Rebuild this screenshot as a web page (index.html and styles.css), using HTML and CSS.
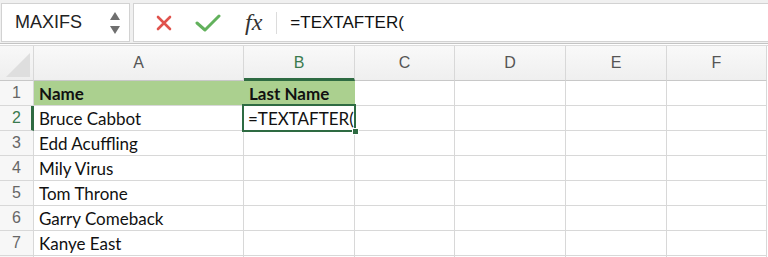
FILE: index.html
```html
<!DOCTYPE html>
<html lang="en">
<head>
    <meta charset="UTF-8">
    <title>TEXTAFTER</title>
    <link rel="stylesheet" href="styles.css">
</head>
<body>
    <div class="toolbar">
        <div class="name-box">
            <span class="name">MAXIFS</span>
            <svg class="spin" width="12" height="26" viewBox="0 0 12 26">
                <path d="M6 2 L11 10 L1 10 Z" fill="#6f6f6f"/>
                <path d="M1 16 L11 16 L6 24 Z" fill="#6f6f6f"/>
            </svg>
        </div>
        <div class="formula-box">
            <svg class="icon" width="18" height="18" viewBox="0 0 18 18">
                <path d="M3 3 L15 15 M15 3 L3 15" stroke="#e0534d" stroke-width="2.6" stroke-linecap="round"/>
            </svg>
            <svg class="icon" width="26" height="20" viewBox="0 0 26 20">
                <path d="M2 10 L10 17 L24 3" fill="none" stroke="#62b15c" stroke-width="3" stroke-linecap="round" stroke-linejoin="round"/>
            </svg>
            <span class="fx">fx</span>
            <span class="sep"></span>
            <span class="formula">=TEXTAFTER(</span>
        </div>
    </div>

    <div class="sheet">
        <div class="corner"><span class="tri"></span></div>
        <div class="col-head">A</div>
        <div class="col-head active">B</div>
        <div class="col-head">C</div>
        <div class="col-head">D</div>
        <div class="col-head">E</div>
        <div class="col-head">F</div>

        <div class="row-head">1</div>
        <div class="cell title">Name</div>
        <div class="cell title">Last Name</div>
        <div class="cell"></div><div class="cell"></div><div class="cell"></div><div class="cell"></div>

        <div class="row-head active">2</div>
        <div class="cell">Bruce Cabbot</div>
        <div class="cell selected">=TEXTAFTER(<span class="caret"></span></div>
        <div class="cell"></div><div class="cell"></div><div class="cell"></div><div class="cell"></div>

        <div class="row-head">3</div>
        <div class="cell">Edd Acuffling</div>
        <div class="cell"></div><div class="cell"></div><div class="cell"></div><div class="cell"></div><div class="cell"></div>

        <div class="row-head">4</div>
        <div class="cell">Mily Virus</div>
        <div class="cell"></div><div class="cell"></div><div class="cell"></div><div class="cell"></div><div class="cell"></div>

        <div class="row-head">5</div>
        <div class="cell">Tom Throne</div>
        <div class="cell"></div><div class="cell"></div><div class="cell"></div><div class="cell"></div><div class="cell"></div>

        <div class="row-head">6</div>
        <div class="cell">Garry Comeback</div>
        <div class="cell"></div><div class="cell"></div><div class="cell"></div><div class="cell"></div><div class="cell"></div>

        <div class="row-head">7</div>
        <div class="cell">Kanye East</div>
        <div class="cell"></div><div class="cell"></div><div class="cell"></div><div class="cell"></div><div class="cell"></div>

        <div class="row-head last"></div>
        <div class="cell last"></div><div class="cell last"></div><div class="cell last"></div><div class="cell last"></div><div class="cell last"></div><div class="cell last"></div>
    </div>
</body>
</html>
```

FILE: styles.css
```css
body {
    margin: 0;
    background-color: #fff;
    font-family: "Liberation Sans", Arial, sans-serif;
    overflow: hidden;
}

.toolbar {
    display: flex;
    gap: 3px;
    height: 44px;
    padding: 3px 0 0 1px;
    box-sizing: border-box;
    background-color: #f0f0f0;
    border-bottom: 1px solid #c4c4c4;
}

.name-box {
    display: flex;
    align-items: center;
    justify-content: space-between;
    width: 129px;
    height: 39px;
    box-sizing: border-box;
    padding: 0 8px 0 13px;
    background-color: #fff;
    border: 1px solid #d2d2d2;
}

.name {
    font-size: 18px;
    color: #222;
}

.formula-box {
    flex: 1;
    display: flex;
    align-items: center;
    height: 39px;
    box-sizing: border-box;
    padding-left: 21px;
    background-color: #fff;
    border: 1px solid #d2d2d2;
    border-right: none;
}

.icon {
    margin-right: 22px;
}

.fx {
    font-family: "Liberation Serif", serif;
    font-style: italic;
    font-size: 24px;
    color: #333;
    margin-left: 2px;
}

.sep {
    width: 1px;
    height: 22px;
    background-color: #dcdcdc;
    margin: 0 13px 0 14px;
}

.formula {
    font-size: 17px;
    color: #111;
}

.sheet {
    display: grid;
    grid-template-columns: 34px 210px 111px 100px 111px 101px 100px;
    grid-template-rows: 35px repeat(7, 25px) 2px;
    border-top: 1px solid #dcdcdc;
    margin-top: 1px;
}

.corner,
.col-head,
.row-head,
.cell {
    box-sizing: border-box;
    border-right: 1px solid #d8d8d8;
    border-bottom: 1px solid #d8d8d8;
}

.row-head.last,
.cell.last {
    border-bottom: none;
}

.corner {
    position: relative;
    background: linear-gradient(#f8f8f8, #eeeeee);
    border-bottom-color: #c8c8c8;
}

.tri {
    position: absolute;
    right: 3px;
    bottom: 3px;
    width: 0;
    height: 0;
    border-left: 24px solid transparent;
    border-bottom: 24px solid #dedede;
}

.col-head {
    display: flex;
    align-items: center;
    justify-content: center;
    background: linear-gradient(#f9f9f9, #efefef);
    border-bottom-color: #c8c8c8;
    font-size: 16px;
    color: #555;
}

.col-head.active {
    color: #3a7a4e;
    border-bottom: 3px solid #2e6b42;
    padding-top: 2px;
}

.row-head {
    display: flex;
    align-items: center;
    justify-content: center;
    background-color: #f7f7f7;
    font-size: 16px;
    color: #666;
}

.row-head.active {
    color: #3a7a4e;
    border-right: 3px solid #2e6b42;
    padding-left: 2px;
}

.cell {
    display: flex;
    align-items: center;
    padding-left: 5px;
    font-family: Lato, "Noto Sans", sans-serif;
    font-size: 17px;
    color: #111;
    white-space: nowrap;
}

.cell.title {
    background-color: #abd08f;
    font-weight: bold;
    border-right-color: #abd08f;
}

.cell.selected {
    position: relative;
    padding-left: 4px;
}

.cell.selected::before {
    content: "";
    position: absolute;
    left: -2px;
    top: -2px;
    right: -2px;
    bottom: -2px;
    border: 2px solid #2e6b42;
}

.cell.selected::after {
    content: "";
    position: absolute;
    right: -5px;
    bottom: -5px;
    width: 5px;
    height: 5px;
    background-color: #2e6b42;
    border: 1px solid #fff;
}

.caret {
    display: inline-block;
    width: 1px;
    height: 18px;
    margin-left: 1px;
    background-color: #000;
}
```
